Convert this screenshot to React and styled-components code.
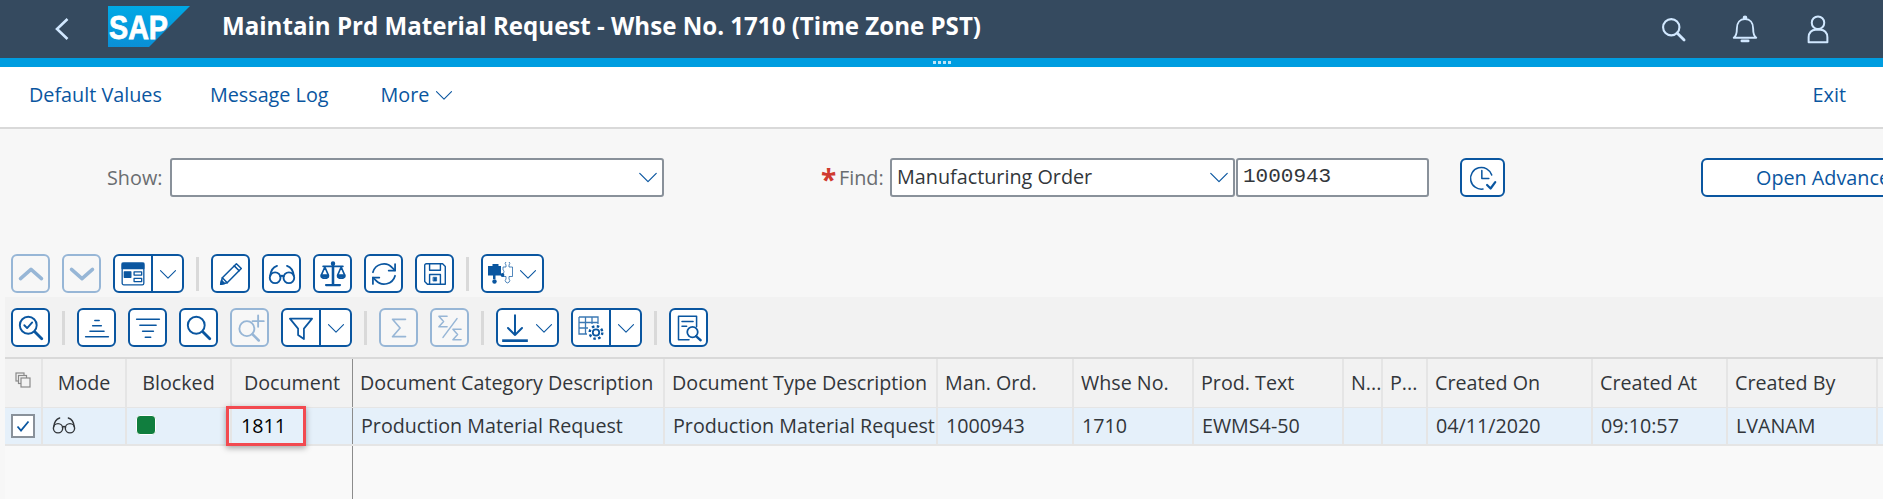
import React from 'react';
import styled, { createGlobalStyle } from 'styled-components';

const BLUE = '#0a56a0';
const FONT = '"Open Sans", "Noto Sans", sans-serif';

const GlobalStyle = createGlobalStyle`
    html, body {
        margin: 0;
        padding: 0;
        width: 100%;
        height: 100%;
        overflow: hidden;
        background: #f7f7f7;
        font-family: ${FONT};
    }
`;

const COLUMNS = [
    { title: 'Document Category Description', value: 'Production Material Request', width: 312 },
    { title: 'Document Type Description', value: 'Production Material Request', width: 273 },
    { title: 'Man. Ord.', value: '1000943', width: 136 },
    { title: 'Whse No.', value: '1710', width: 120 },
    { title: 'Prod. Text', value: 'EWMS4-50', width: 150 },
    { title: 'N...', value: '', width: 39 },
    { title: 'P...', value: '', width: 45 },
    { title: 'Created On', value: '04/11/2020', width: 165 },
    { title: 'Created At', value: '09:10:57', width: 135 },
    { title: 'Created By', value: 'LVANAM', width: 150 },
    { title: '', value: '', width: 5 },
];

const FROZEN = '38px 84px 105px 121px';
const TEMPLATE = `${FROZEN} ${COLUMNS.map((c) => `${c.width}px`).join(' ')}`;

const Icon = ({ size = 24, children, sw = 1.6, color = 'currentColor' }) => (
    <svg width={size} height={size} viewBox="0 0 24 24" fill="none" stroke={color} strokeWidth={sw} strokeLinecap="round" strokeLinejoin="round">
        {children}
    </svg>
);

const Chevron = ({ size = 20 }) => (
    <Icon size={size} sw={1.3}><path d="M3 8l9 9 9-9" /></Icon>
);

const Glasses = ({ size = 30, sw = 1.5 }) => (
    <Icon size={size} sw={sw}>
        <circle cx="6.5" cy="15" r="4.3" />
        <circle cx="17.5" cy="15" r="4.3" />
        <path d="M10.6 14c.9-.8 1.9-.8 2.8 0M2.6 13.5C3 9 5 6.5 8 5.5M21.4 13.5C21 9 19 6.5 16 5.5" />
    </Icon>
);

const icons = {
    up: <Icon size={28} sw={3}><path d="M3 16l9-8 9 8" /></Icon>,
    down: <Icon size={28} sw={3}><path d="M3 8l9 8 9-8" /></Icon>,
    layout: (
        <Icon size={26} sw={1.2}>
            <rect x="2" y="2" width="20" height="20" rx="1.5" />
            <path d="M2 2h20v5H2z" fill="currentColor" />
            <rect x="4" y="10" width="6" height="5" fill="currentColor" />
            <rect x="13" y="10" width="7" height="3" />
            <rect x="13" y="16" width="7" height="3" />
        </Icon>
    ),
    pencil: (
        <Icon size={26} sw={1.4}>
            <path d="M2.500 21.500l1.500-6L17 2.500l4.500 4.500L8.500 20z" />
            <path d="M15 4.500l4.500 4.500M4 15.500l4.500 4.500" />
            <path d="M2.500 21.500l.8-3.500 2.700 2.700z" fill="currentColor" />
        </Icon>
    ),
    glasses: <Glasses />,
    scale: (
        <Icon size={28} sw={1.400}>
            <path d="M12 4v16" strokeWidth="2.200" />
            <path d="M6 21.500h12" strokeWidth="1.800" />
            <path d="M3.500 5.500h17" />
            <circle cx="12" cy="3" r="1.200" fill="currentColor" />
            <path d="M5 6L2 13c0 3.500 6 3.500 6 0zM19 6l-3 7c0 3.500 6 3.500 6 0z" />
            <path d="M2 13h6v1.500H2zM16 13h6v1.500h-6z" fill="currentColor" />
        </Icon>
    ),
    refresh: (
        <Icon size={28} sw={1.500}>
            <path d="M2.500 10.500A9.700 9.700 0 0 1 19 6.500l2.500 2.500M21.500 13.500A9.700 9.700 0 0 1 5 17.500L2.500 15" />
            <path d="M21.500 3.500V9H16M2.500 20.500V15H8" />
        </Icon>
    ),
    save: (
        <Icon size={26} sw={1.300}>
            <path d="M2.500 4a1.500 1.500 0 0 1 1.500-1.500h15l2.500 2.500v16.500H5l-2.500-2.500z" />
            <path d="M7 2.500V8.500h10V2.500M7 21.500V12.500h10v9" />
            <rect x="10.500" y="15" width="3" height="3.500" fill="currentColor" strokeWidth=".6" />
        </Icon>
    ),
    puzzle: (
        <svg width="25" height="24" viewBox="0 0 25 24" fill="none" stroke="currentColor" strokeWidth="1">
            <path d="M0 4h4.500V2h6v2H13v9.500H7.500V17H5v-3.500H0z" fill="currentColor" stroke="none" />
            <circle cx="14.500" cy="13" r="1.900" fill="currentColor" stroke="none" />
            <circle cx="6.500" cy="19.500" r="2.200" fill="currentColor" stroke="none" />
            <path d="M15 5h3V3a2.200 2.200 0 1 1 3 0v2h3.500v9.500H21v2.500a2.200 2.200 0 1 1-3 0v-2.500h-3v-3a2 2 0 0 0 0-3.500z" strokeOpacity=".7" />
        </svg>
    ),
    zoomCheck: (
        <Icon size={27} sw={1.700}>
            <circle cx="10" cy="10" r="7.500" />
            <path d="M16 16l6 6" strokeWidth="2.500" />
            <path d="M6.500 10l2.500 2.500 4.500-5" />
        </Icon>
    ),
    sortAsc: (
        <Icon size={26} sw={1.400}>
            <path d="M10 5h4M8 10h8M5.500 15h13M1.500 20h21" />
        </Icon>
    ),
    sortDesc: (
        <Icon size={26} sw={1.400}>
            <path d="M1.500 4h21M4.500 9.500h15M7 15h10M9.500 20.500h5" />
        </Icon>
    ),
    search: (
        <Icon size={27} sw={1.700}>
            <circle cx="10" cy="10" r="7.500" />
            <path d="M16 16l6 6" strokeWidth="2.500" />
        </Icon>
    ),
    searchPlus: (
        <Icon size={30} sw={1.500}>
            <circle cx="9.500" cy="12.500" r="6" />
            <path d="M14 17l5 5" strokeWidth="2" />
            <path d="M18.500 2v9M14 6.500h9" />
        </Icon>
    ),
    filter: (
        <Icon size={28} sw={1.500}>
            <path d="M2.500 4h19L14.500 12.500v9l-5-3.500v-5.500z" />
        </Icon>
    ),
    sum: <Icon size={26} sw={1.500}><path d="M18 4H6l7 8-7 8h12" /></Icon>,
    sumRatio: (
        <Icon size={28} sw={1.300}>
            <path d="M9.500 2H2.500l4 4.500-4 4.500h7M21.500 13h-7l4 4.500-4 4.500h7M18 4L6 20" />
        </Icon>
    ),
    download: (
        <Icon size={28} sw={1.700}>
            <path d="M12 1v17M6 12l6 6 6-6" />
            <path d="M1 23h22" strokeWidth="2.600" strokeLinecap="butt" />
        </Icon>
    ),
    tableGear: (
        <svg width="26" height="26" viewBox="0 0 26 26" fill="none" stroke="currentColor" strokeWidth="1.300">
            <path d="M1 2h19v7M1 2v17h8M1 7.500h19M1 13h9M1 19h8M7.500 2v17M14 2v7" strokeOpacity=".8" />
            <circle cx="18" cy="17.500" r="3.200" strokeWidth="1.800" />
            <circle cx="18" cy="17.500" r="6.300" strokeWidth="2.400" strokeDasharray="2.500 2.450" />
        </svg>
    ),
    report: (
        <Icon size={28} sw={1.300}>
            <path d="M18.500 11V2H3v20h9" />
            <path d="M6 6.500h9.500M6 10.500h4" />
            <circle cx="15" cy="15.500" r="4.500" strokeWidth="1.500" />
            <path d="M18 19l4 3.500" strokeWidth="2" />
        </Icon>
    ),
    history: (
        <Icon size={28} sw={1.300}>
            <path d="M19.500 9.500A9.300 9.300 0 1 0 12 21.500" />
            <path d="M11 5.500v7h6" />
            <path d="M15.500 18l3 3 4-5.500" strokeWidth="1.900" />
        </Icon>
    ),
};

function ToolButton({ icon, disabled, caret, split }) {
    return (
        <Tool disabled={disabled} $caret={caret} $split={split}>
            <ToolPart $split={split}>
                {icons[icon]}
                {caret && <Chevron />}
            </ToolPart>
            {split && <SplitCaret><Chevron /></SplitCaret>}
        </Tool>
    );
}

function App() {
    return (
        <Page>
            <GlobalStyle />
            <ShellBar>
                <BackArrow>
                    <svg width="16" height="24" viewBox="0 0 16 24" fill="none" stroke="#d1e8ff" strokeWidth="2.600">
                        <path d="M13.500 2L3 12l10.500 10" />
                    </svg>
                </BackArrow>
                <SapLogo viewBox="0 0 82 41">
                    <defs>
                        <linearGradient id="sapBlue" x1="0" y1="0" x2="0" y2="1">
                            <stop offset="0" stopColor="#00a9e5" />
                            <stop offset="1" stopColor="#0a8fd6" />
                        </linearGradient>
                    </defs>
                    <path d="M0 0h82L41 41H0z" fill="url(#sapBlue)" />
                    <text x="1" y="33" fill="#fff" stroke="#fff" strokeWidth=".8" fontFamily="Liberation Sans" fontWeight="700" fontSize="33" textLength="59" lengthAdjust="spacingAndGlyphs">SAP</text>
                </SapLogo>
                <Title>Maintain Prd Material Request - Whse No. 1710 (Time Zone PST)</Title>
                <ShellIcons>
                    <Icon size={28} sw={1.800} color="#d1e8ff">
                        <circle cx="10.500" cy="10.500" r="7" />
                        <path d="M15.500 15.500l6 6" strokeWidth="2.400" />
                    </Icon>
                    <Icon size={30} sw={1.500} color="#d1e8ff">
                        <path d="M3 19c2-1.500 2.500-3 2.500-7.500C5.500 7 8 4 12 4s6.500 3 6.500 7.500c0 4.500.5 6 2.500 7.500z" />
                        <circle cx="12" cy="3" r="1.100" fill="#d1e8ff" />
                        <path d="M9.500 21.500h5" strokeWidth="2.200" />
                    </Icon>
                    <Icon size={30} sw={1.600} color="#d1e8ff">
                        <circle cx="12" cy="7" r="5" />
                        <path d="M4.500 22.500v-4c0-3.500 2.500-6 5.500-6h4c3 0 5.500 2.500 5.500 6v4z" />
                    </Icon>
                </ShellIcons>
            </ShellBar>
            <BlueStrip>
                <Grip><i /><i /><i /><i /></Grip>
            </BlueStrip>
            <ActionBar>
                <ActionLink>Default Values</ActionLink>
                <ActionLink>Message Log</ActionLink>
                <MoreLink>More <Chevron size={20} /></MoreLink>
                <ExitLink>Exit</ExitLink>
            </ActionBar>
            <FilterBar>
                <ShowLabel>Show:</ShowLabel>
                <ShowSelect><Chevron size={22} /></ShowSelect>
                <Required>*</Required>
                <FindLabel>Find:</FindLabel>
                <FindSelect>Manufacturing Order<Chevron size={22} /></FindSelect>
                <FindInput>1000943</FindInput>
                <HistoryButton>{icons.history}</HistoryButton>
                <AdvancedButton>Open Advanced Search</AdvancedButton>
            </FilterBar>
            <TopTools>
                <ToolButton icon="up" disabled />
                <ToolButton icon="down" disabled />
                <ToolButton icon="layout" split />
                <Divider />
                <ToolButton icon="pencil" />
                <ToolButton icon="glasses" />
                <ToolButton icon="scale" />
                <ToolButton icon="refresh" />
                <ToolButton icon="save" />
                <Divider />
                <ToolButton icon="puzzle" caret />
            </TopTools>
            <TableTools>
                <ToolButton icon="zoomCheck" />
                <Divider />
                <ToolButton icon="sortAsc" />
                <ToolButton icon="sortDesc" />
                <ToolButton icon="search" />
                <ToolButton icon="searchPlus" disabled />
                <ToolButton icon="filter" split />
                <Divider />
                <ToolButton icon="sum" disabled />
                <ToolButton icon="sumRatio" disabled />
                <Divider />
                <ToolButton icon="download" caret />
                <ToolButton icon="tableGear" split />
                <Divider />
                <ToolButton icon="report" />
            </TableTools>
            <Table>
                <HeaderRow>
                    <SelectAll>
                        <svg width="16" height="16" viewBox="0 0 16 16" fill="#f2f2f2" stroke="#8a8a8a" strokeWidth="1.200">
                            <rect x="1" y="1" width="8" height="8" />
                            <rect x="3.500" y="3.500" width="8" height="8" />
                            <rect x="6" y="6" width="9" height="9" />
                        </svg>
                    </SelectAll>
                    <HeadCell $center>Mode</HeadCell>
                    <HeadCell $center>Blocked</HeadCell>
                    <HeadCell $center $frozen>Document</HeadCell>
                    {COLUMNS.map((c, i) => <HeadCell key={i}>{c.title}</HeadCell>)}
                </HeaderRow>
                <DataRow>
                    <SelectCell><Checkbox>
                        <svg width="16" height="16" viewBox="0 0 16 16" fill="none" stroke={BLUE} strokeWidth="1.800"><path d="M2.500 8.500l3.500 4 7.500-9" /></svg>
                    </Checkbox></SelectCell>
                    <DataCell><Glasses size={26} sw={1.300} /></DataCell>
                    <DataCell><Status /></DataCell>
                    <DataCell $dark $frozen>
                        1811
                        <Highlight />
                    </DataCell>
                    {COLUMNS.map((c, i) => <DataCell key={i}>{c.value}</DataCell>)}
                </DataRow>
                <EmptyArea><Frozen /></EmptyArea>
            </Table>
        </Page>
    );
}

export default App;

const Page = styled.div`
    width: 1883px;
    height: 499px;
    overflow: hidden;
    background: #f7f7f7;
    color: #32363a;
    display: flex;
    flex-direction: column;
`;

const ShellBar = styled.header`
    height: 58px;
    flex: none;
    background: #354a5f;
    display: flex;
    align-items: center;
    padding-left: 54px;
`;

const BackArrow = styled.div`
    display: flex;
    width: 54px;
`;

const SapLogo = styled.svg`
    width: 82px;
    height: 41px;
    margin-top: -5px;
`;

const Title = styled.h1`
    margin: 0 0 8px 32px;
    font-size: 24.1px;
    font-weight: 700;
    color: #fff;
    white-space: nowrap;
`;

const ShellIcons = styled.div`
    margin-left: auto;
    display: flex;
    align-items: center;
    gap: 43px;
    padding-right: 50px;
`;

const BlueStrip = styled.div`
    height: 9px;
    flex: none;
    background: #009de0;
    display: flex;
    justify-content: center;
    align-items: center;
`;

const Grip = styled.div`
    display: flex;
    gap: 2px;

    i {
        width: 3px;
        height: 3px;
        background: #bfe3f6;
    }
`;

const ActionBar = styled.nav`
    height: 60px;
    flex: none;
    box-sizing: content-box;
    background: #fff;
    border-bottom: 2px solid #d9d9d9;
    display: flex;
    align-items: center;
    padding: 0 37px 0 29px;
    gap: 48px;
`;

const ActionLink = styled.a`
    display: flex;
    align-items: center;
    gap: 5px;
    margin-bottom: 5px;
    font-size: 19.8px;
    color: ${BLUE};
    white-space: nowrap;
`;

const MoreLink = styled(ActionLink)`
    margin-left: 4px;
`;

const ExitLink = styled(ActionLink)`
    margin-left: auto;
`;

const FilterBar = styled.div`
    height: 39px;
    flex: none;
    margin-top: 29px;
    display: flex;
    align-items: stretch;
    font-size: 19.8px;

    > * {
        flex: none;
    }
`;

const ShowLabel = styled.label`
    margin-left: 107px;
    width: 63px;
    display: flex;
    align-items: center;
    color: #6a6d70;
`;

const Field = styled.div`
    box-sizing: border-box;
    background: #fff;
    border: 2px solid #89919a;
    border-radius: 3px;
    display: flex;
    align-items: center;
    justify-content: space-between;
    color: #32363a;
    white-space: nowrap;
    padding: 0 3px 2px 5px;

    svg {
        color: ${BLUE};
    }
`;

const ShowSelect = styled(Field)`
    width: 494px;
    justify-content: flex-end;
`;

const Required = styled.span`
    margin-left: 157px;
    width: 18px;
    color: #d03b30;
    font-size: 28px;
    font-weight: 700;
    line-height: 42px;
`;

const FindLabel = styled.label`
    width: 51px;
    display: flex;
    align-items: center;
    color: #6a6d70;
`;

const FindSelect = styled(Field)`
    width: 345px;
`;

const FindInput = styled(Field)`
    width: 193px;
    margin-left: 1px;
    padding-left: 5px;
    font-family: "Liberation Mono", monospace;
    font-size: 21px;
`;

const Tool = styled.button`
    box-sizing: border-box;
    height: 39px;
    width: ${(p) => (p.$split ? '71px' : p.$caret ? '63px' : '39px')};
    flex: none;
    padding: 0;
    background: ${(p) => (p.disabled ? '#f7f7f7' : '#fff')};
    border: 2px solid ${(p) => (p.disabled ? '#97b6d6' : BLUE)};
    border-radius: 6px;
    color: ${(p) => (p.disabled ? '#97b6d6' : BLUE)};
    display: flex;
    align-items: stretch;
`;

const ToolPart = styled.span`
    flex: ${(p) => (p.$split ? 'none' : '1')};
    width: ${(p) => (p.$split ? '36px' : 'auto')};
    display: flex;
    align-items: center;
    justify-content: center;
    gap: 5px;
`;

const SplitCaret = styled.span`
    box-sizing: border-box;
    flex: 1;
    border-left: 2px solid ${BLUE};
    display: flex;
    align-items: center;
    justify-content: center;
`;

const HistoryButton = styled(Tool)`
    width: 45px;
    margin-left: 31px;
    justify-content: center;
    align-items: center;
`;

const AdvancedButton = styled(Tool)`
    margin-left: 196px;
    width: 300px;
    font-family: ${FONT};
    font-size: 19.8px;
    color: ${BLUE};
    justify-content: flex-start;
    align-items: center;
    padding-left: 53px;
    white-space: nowrap;
`;

const ToolRow = styled.div`
    display: flex;
    align-items: center;
    gap: 12px;
    padding-left: 11px;
    flex: none;
`;

const TopTools = styled(ToolRow)`
    margin-top: 57px;
`;

const TableTools = styled(ToolRow)`
    margin-top: 4px;
    margin-left: 5px;
    padding: 11px 0 10px 6px;
    background: #f2f2f2;
`;

const Divider = styled.span`
    width: 3px;
    height: 34px;
    background: #d9d9d9;
`;

const Table = styled.div`
    flex: 1;
    margin-left: 5px;
    border-top: 2px solid #d9d9d9;
    display: flex;
    flex-direction: column;
    font-size: 19.7px;
`;

const HeaderRow = styled.div`
    display: grid;
    grid-template-columns: ${TEMPLATE};
    height: 48px;
    background: #f2f2f2;
`;

const DataRow = styled.div`
    box-sizing: border-box;
    display: grid;
    grid-template-columns: ${TEMPLATE};
    height: 39px;
    background: #e5f0fa;
    border-top: 1px solid #e5e5e5;
    border-bottom: 2px solid #e5e5e5;
`;

const Cell = styled.div`
    box-sizing: border-box;
    position: relative;
    display: flex;
    align-items: center;
    padding: 0 0 2px 7px;
    white-space: nowrap;
    overflow: ${(p) => (p.$frozen ? 'visible' : 'hidden')};
    border-right: ${(p) => (p.$frozen ? '1px solid #8c8c8c' : '2px solid #e5e5e5')};
`;

const HeadCell = styled(Cell)`
    justify-content: ${(p) => (p.$center ? 'center' : 'flex-start')};
    padding-left: ${(p) => (p.$center ? '0' : '7px')};
    color: #32363a;
`;

const DataCell = styled(Cell)`
    color: ${(p) => (p.$dark ? '#000' : '#32363a')};
    padding-left: ${(p) => (p.$frozen ? '9px' : '8px')};
`;

const SelectAll = styled(Cell)`
    padding: 0 0 6px 0;
    justify-content: center;
`;

const SelectCell = styled(Cell)`
    padding: 0;
    justify-content: center;
`;

const Checkbox = styled.span`
    box-sizing: border-box;
    width: 24px;
    height: 24px;
    background: #fff;
    border: 2px solid #89919a;
    display: flex;
    align-items: center;
    justify-content: center;
`;

const Status = styled.span`
    box-sizing: border-box;
    width: 20px;
    height: 20px;
    margin-left: 1px;
    background: #107e3e;
    border-radius: 4px;
    border: 1px solid #fff;
`;

const Highlight = styled.span`
    position: absolute;
    left: -6px;
    top: -2px;
    width: 80px;
    height: 40px;
    box-sizing: border-box;
    border: 3px solid #f24a50;
    box-shadow: 0 2px 6px rgba(0, 0, 0, 0.35);
`;

const EmptyArea = styled.div`
    flex: 1;
    background: #f9f9f9;
    display: flex;
`;

const Frozen = styled.div`
    width: 347px;
    border-right: 1px solid #8c8c8c;
`;
